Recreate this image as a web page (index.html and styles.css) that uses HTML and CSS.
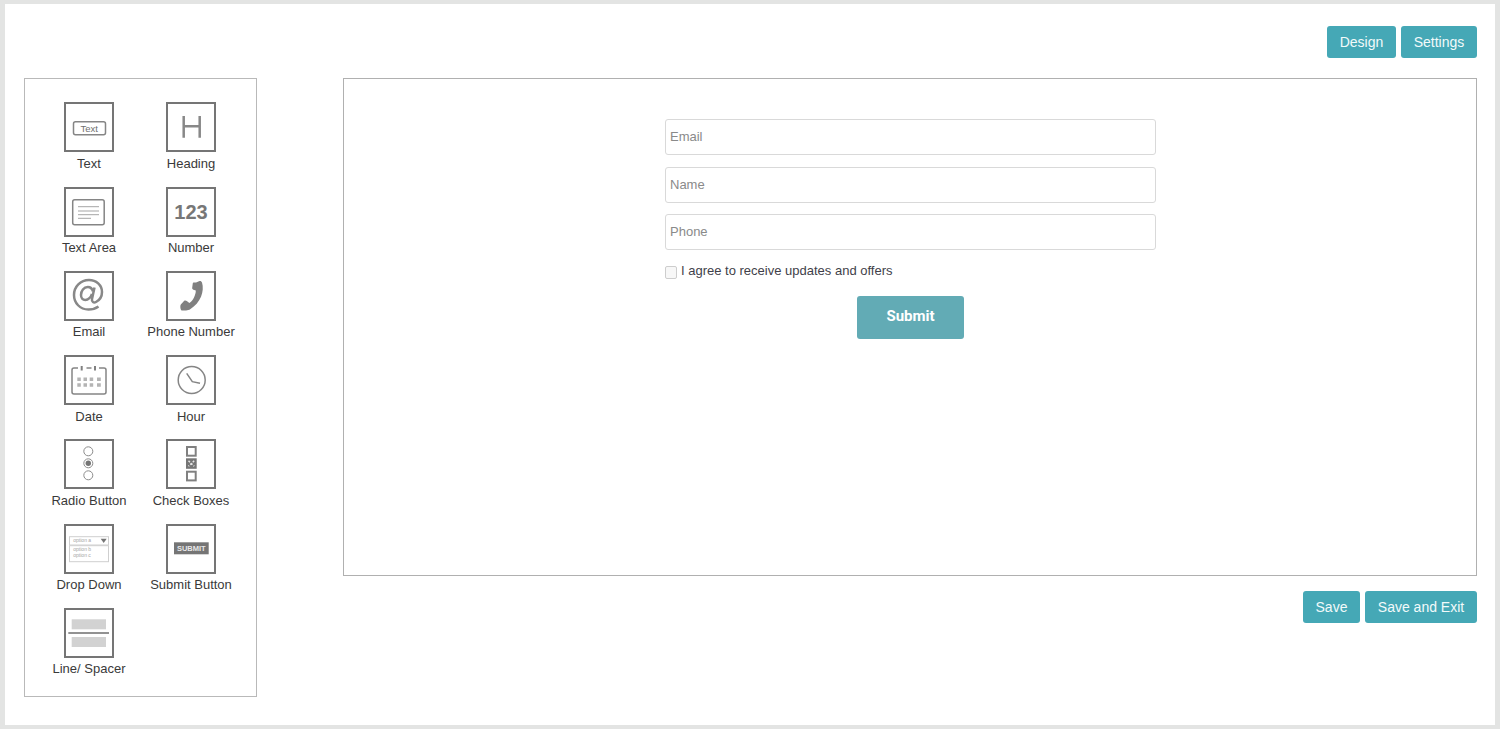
FILE: index.html
```html
<!DOCTYPE html>
<html lang="en">
<head>
<meta charset="utf-8">
<title>Form builder</title>
<link rel="stylesheet" href="styles.css">
</head>
<body>
<div class="frame">
  <div class="top-actions">
    <button class="btn btn-design">Design</button>
    <button class="btn btn-settings">Settings</button>
  </div>
  <div class="workspace">
    <aside class="palette">
      <div class="tool">
        <div class="tool-icon"><svg viewBox="0 0 50 50"><rect x="9.500" y="19.800" width="32" height="13" rx="2" class="s15"/><text x="25.300" y="30" class="t-text">Text</text></svg></div>
        <span class="tool-label">Text</span>
      </div>
      <div class="tool">
        <div class="tool-icon"><svg viewBox="0 0 50 50"><path d="M17.700 14v21.700M33.700 14v21.700M17.700 24.300h16" class="s-h"/></svg></div>
        <span class="tool-label">Heading</span>
      </div>
      <div class="tool">
        <div class="tool-icon"><svg viewBox="0 0 50 50"><rect x="8.700" y="12.700" width="31.500" height="25" rx="2" class="s15"/><path d="M14 19.700h21M14 24h21M14 27.700h21M14 31.300h13" class="s-m"/></svg></div>
        <span class="tool-label">Text Area</span>
      </div>
      <div class="tool">
        <div class="tool-icon"><span class="num">123</span></div>
        <span class="tool-label">Number</span>
      </div>
      <div class="tool">
        <div class="tool-icon"><svg viewBox="0 0 50 50"><path d="M30.500 16.500l-2.500 11.500c-.6 3 1.800 4.200 4 3 3.800-2 6-6 6-10 0-7-5.800-12-13-12-8.500 0-15 6.800-15 15 0 8 6 14.500 14.500 14.500 4 0 7.200-1 10-3" class="s-h"/><path d="M29 20.500c-.8-3-3-4.500-5.200-4.500-4 0-6.800 4-6.800 8 0 3 1.800 5 4.300 5 3 0 5.700-3 6.700-6" class="s-h"/></svg></div>
        <span class="tool-label">Email</span>
      </div>
      <div class="tool">
        <div class="tool-icon"><svg viewBox="0 0 50 50"><path d="M30 11.500l3-1.300c1.500-.6 2.500 0 3 1.300 1.300 4.200 1 9.500-1 14.200-2 5-6 9.300-10.500 12.300-1.500 1-2.800 1.400-4.500 1.400-2.300.2-4.600.4-5-.5-.8-1.400-.9-4.200-.2-5.300l3.200-3.700c1-.8 2-.5 2.800.2l2.500 2c2-1.400 3.500-3.300 4.700-5.700 1.300-2.400 1.800-4.700 1.800-6.900l-2.500-.8c-.8-.3-1.200-1-1.100-1.900l.6-4.500c.1-.4.3-.7.700-.8z" class="f-p"/></svg></div>
        <span class="tool-label">Phone Number</span>
      </div>
      <div class="tool">
        <div class="tool-icon"><svg viewBox="0 0 50 50"><path d="M14 13h-4a2 2 0 0 0-2 2v22a2 2 0 0 0 2 2h30a2 2 0 0 0 2-2v-22a2 2 0 0 0-2-2h-5M22.500 13h5" class="s15"/><path d="M17.700 11v4.500M31 11v4.500" class="s2"/><path d="M13.300 22.500h3.500v3.500h-3.500zM19.500 22.500h3.500v3.500h-3.500zM25.700 22.500h3.500v3.500h-3.500zM33 22.500h3.800v3.500h-3.800zM13.300 28.200h3.500v3.500h-3.500zM19.500 28.200h3.500v3.500h-3.500zM25.700 28.200h3.500v3.500h-3.500zM33 28.200h3.800v3.500h-3.800z" class="f-l"/></svg></div>
        <span class="tool-label">Date</span>
      </div>
      <div class="tool">
        <div class="tool-icon"><svg viewBox="0 0 50 50"><circle cx="25.700" cy="25" r="13.500" class="s15"/><path d="M20.700 18.300l5.600 8.400 7.700 1.600" class="s15"/></svg></div>
        <span class="tool-label">Hour</span>
      </div>
      <div class="tool">
        <div class="tool-icon"><svg viewBox="0 0 50 50"><circle cx="24.300" cy="12.300" r="4.500" class="s1"/><circle cx="24.300" cy="24.300" r="4.500" class="s1"/><circle cx="24.300" cy="24.300" r="2.700" class="f"/><circle cx="24.300" cy="36.300" r="4.500" class="s1"/></svg></div>
        <span class="tool-label">Radio Button</span>
      </div>
      <div class="tool">
        <div class="tool-icon"><svg viewBox="0 0 50 50"><rect x="21" y="8" width="8.700" height="8.700" class="s2"/><rect x="20" y="19.300" width="10.700" height="10.500" class="f"/><path d="M22.500 21.800l5.700 5.500M28.200 21.800l-5.700 5.500" class="s-w"/><rect x="21" y="32.700" width="8.700" height="8.700" class="s2"/></svg></div>
        <span class="tool-label">Check Boxes</span>
      </div>
      <div class="tool">
        <div class="tool-icon"><svg viewBox="0 0 50 50"><rect x="5.500" y="12.700" width="39" height="8.300" class="s-l"/><rect x="5.500" y="21.700" width="39" height="16" class="s-l"/><text x="9.300" y="18" class="t-tiny">option a</text><text x="9.300" y="27" class="t-tiny">option b</text><text x="9.300" y="33" class="t-tiny">option c</text><path d="M36.700 14.700h6l-3 4.200z" class="f"/></svg></div>
        <span class="tool-label">Drop Down</span>
      </div>
      <div class="tool">
        <div class="tool-icon"><svg viewBox="0 0 50 50"><rect x="8" y="18.300" width="34.700" height="12" class="f"/><text x="25.300" y="27" class="t-submit">SUBMIT</text></svg></div>
        <span class="tool-label">Submit Button</span>
      </div>
      <div class="tool">
        <div class="tool-icon"><svg viewBox="0 0 50 50"><rect x="7.700" y="11.300" width="34.300" height="10" class="f-g"/><rect x="7.700" y="29" width="34.300" height="10" class="f-g"/><path d="M4.300 25h40.700" class="s15d"/></svg></div>
        <span class="tool-label">Line/ Spacer</span>
      </div>
    </aside>
    <main class="main-col">
      <section class="canvas">
        <form class="form">
          <input class="field" type="text" placeholder="Email">
          <input class="field" type="text" placeholder="Name">
          <input class="field" type="text" placeholder="Phone">
          <label class="agree"><span class="box"></span><span>I agree to receive updates and offers</span></label>
          <div class="submit-row"><button type="button" class="submit">Submit</button></div>
        </form>
      </section>
      <div class="bottom-actions">
        <button class="btn btn-save">Save</button>
        <button class="btn btn-exit">Save and Exit</button>
      </div>
    </main>
  </div>
</div>
</body>
</html>
```
FILE: styles.css
```css
* { box-sizing: border-box; }
html, body { margin: 0; height: 100%; }
body {
  font-family: "Liberation Sans", Arial, sans-serif;
  color: #333;
  background: #fff;
  overflow: hidden;
}
.frame {
  width: 1500px;
  height: 729px;
  border: solid #e3e4e3;
  border-width: 4px 5px;
  padding: 22px 18px 0 19px;
  background: #fff;
}
.top-actions {
  display: flex;
  justify-content: flex-end;
  gap: 5px;
  height: 32px;
}
.btn {
  height: 32px;
  border: 0;
  border-radius: 3px;
  background: #45a8b6;
  color: #f2fafa;
  font: 14px/32px "Liberation Sans", Arial, sans-serif;
  padding: 0;
}
.btn-design { width: 69px; }
.btn-settings { width: 76px; }
.btn-save { width: 57px; }
.btn-exit { width: 112px; }
.workspace {
  display: flex;
  margin-top: 20px;
}
.palette {
  width: 233px;
  height: 619px;
  border: 1px solid #b9b9b9;
  padding: 23.300px 0 0 14px;
  display: grid;
  grid-template-columns: 102px 102px;
  grid-auto-rows: 84.250px;
  align-content: start;
}
.tool {
  display: flex;
  flex-direction: column;
  align-items: center;
  width: 100px;
}
.tool-icon {
  width: 50px;
  height: 50px;
  border: 2px solid #757575;
  display: flex;
  align-items: center;
  justify-content: center;
  flex: none;
}
.tool-icon svg {
  width: 50px;
  height: 50px;
  margin: -2px;
  flex: none;
  display: block;
  overflow: visible;
}
.tool-label {
  margin-top: 3.700px;
  font-size: 13px;
  line-height: 15px;
  white-space: nowrap;
  color: #3a3a3a;
}
.s1, .s15, .s2, .s15d, .s-l, .s-w, .s-h, .s-m { fill: none; }
.s1 { stroke: #8d8d8d; stroke-width: 1; }
.s-m { stroke: #a5a5a5; stroke-width: 1; }
.s15 { stroke: #858585; stroke-width: 1.500; }
.s2 { stroke: #808080; stroke-width: 2; }
.s-h { stroke: #888; stroke-width: 2.500; }
.s15d { stroke: #6e6e6e; stroke-width: 1.500; }
.s-l { stroke: #cfcfcf; stroke-width: 1; }
.s-w { stroke: #e6e6e6; stroke-width: 1.500; stroke-dasharray: 2 1.500; }
.f { fill: #757575; }
.f-p { fill: #808080; }
.f-l { fill: #b4b4b4; }
.f-g { fill: #d2d2d2; }
.t-text {
  font-size: 9.500px;
  fill: #6f6f6f;
  text-anchor: middle;
}
.t-tiny {
  font-size: 5px;
  fill: #a5a5a5;
}
.t-submit {
  font-size: 7.500px;
  font-weight: 700;
  fill: #e8e8e8;
  text-anchor: middle;
}
.num {
  font-size: 20px;
  font-weight: 700;
  color: #777;
  line-height: 1;
}
.main-col {
  width: 1134px;
  margin-left: 86px;
}
.canvas {
  height: 498px;
  border: 1px solid #b0b0b0;
  padding: 40px 0 0 321px;
}
.form {
  width: 491px;
  display: flex;
  flex-direction: column;
}
.field {
  width: 491px;
  height: 36px;
  border: 1px solid #d9d9d9;
  border-radius: 3px;
  padding: 0 4px 1px;
  margin-bottom: 11.500px;
  font: 13px "Liberation Sans", Arial, sans-serif;
  color: #333;
  background: #fff;
}
.field::placeholder { color: #8a8a8a; opacity: 1; }
.agree {
  display: flex;
  align-items: flex-start;
  gap: 4px;
  font-size: 13px;
  line-height: 15px;
  color: #3f3f4a;
  margin-top: 1px;
}
.box {
  width: 12px;
  height: 13px;
  margin-top: 3px;
  border: 1px solid #cdcdcd;
  border-radius: 2px;
  background: #f7f7f7;
}
.submit-row {
  display: flex;
  justify-content: center;
  margin-top: 17px;
}
.submit {
  width: 107px;
  height: 43px;
  border: 0;
  border-radius: 3px;
  background: #62abb5;
  color: #fff;
  padding: 0 0 2px;
  font: 700 15px "Roboto", "Liberation Sans", sans-serif;
}
.bottom-actions {
  display: flex;
  justify-content: flex-end;
  gap: 5px;
  margin-top: 15px;
}
```
